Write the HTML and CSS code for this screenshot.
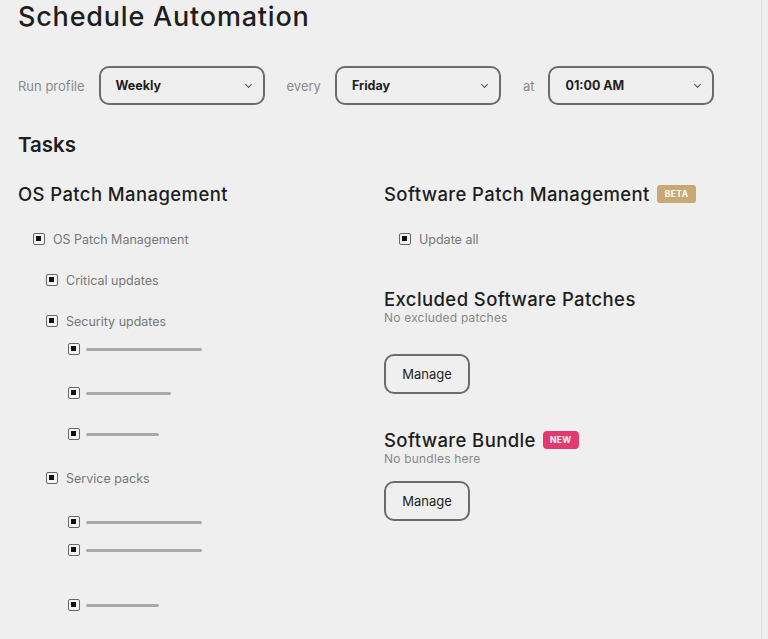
FILE: index.html
```html
<!DOCTYPE html>
<html lang="en">
<head>
    <meta charset="UTF-8">
    <meta name="viewport" content="width=device-width, initial-scale=1.0">
    <title>Schedule Automation</title>
    <link rel="stylesheet" href="styles.css">
</head>
<body>
    <div class="page">
        <h1 class="title">Schedule Automation</h1>

        <div class="schedule">
            <span class="field-label">Run profile</span>
            <div class="select"><span>Weekly</span><span class="chevron"></span></div>
            <span class="field-label">every</span>
            <div class="select"><span>Friday</span><span class="chevron"></span></div>
            <span class="field-label">at</span>
            <div class="select"><span>01:00 AM</span><span class="chevron"></span></div>
        </div>

        <h2 class="tasks-title">Tasks</h2>

        <div class="columns">
            <div class="column">
                <h3 class="section-title">OS Patch Management</h3>
                <ul class="tree">
                    <li class="item level-1"><span class="check"></span><span>OS Patch Management</span></li>
                    <li class="item level-2"><span class="check"></span><span>Critical updates</span></li>
                    <li class="item level-2"><span class="check"></span><span>Security updates</span></li>
                    <li class="item level-3 tight"><span class="check"></span><span class="bar bar-long"></span></li>
                    <li class="item level-3 wide"><span class="check"></span><span class="bar bar-mid"></span></li>
                    <li class="item level-3"><span class="check"></span><span class="bar bar-short"></span></li>
                    <li class="item level-2 wide"><span class="check"></span><span>Service packs</span></li>
                    <li class="item level-3 wide"><span class="check"></span><span class="bar bar-long"></span></li>
                    <li class="item level-3 tight"><span class="check"></span><span class="bar bar-long"></span></li>
                    <li class="item level-3 loose"><span class="check"></span><span class="bar bar-short"></span></li>
                </ul>
            </div>

            <div class="column">
                <h3 class="section-title">Software Patch Management <span class="badge badge-beta">BETA</span></h3>
                <ul class="tree">
                    <li class="item level-1"><span class="check"></span><span>Update all</span></li>
                </ul>

                <div class="block excluded">
                    <h3 class="section-title">Excluded Software Patches</h3>
                    <p class="note">No excluded patches</p>
                    <button class="button">Manage</button>
                </div>

                <div class="block bundle">
                    <h3 class="section-title">Software Bundle <span class="badge badge-new">NEW</span></h3>
                    <p class="note">No bundles here</p>
                    <button class="button">Manage</button>
                </div>
            </div>
        </div>
    </div>
</body>
</html>
```

FILE: styles.css
```css
body {
    margin: 0;
    background: #efefef;
    font-family: Inter, "Noto Sans", sans-serif;
    color: #1e1e1e;
}
.page {
    width: 743px;
    height: 639px;
    padding-left: 18px;
    border-right: 1px solid #e2e2e2;
    overflow: hidden;
}
.title {
    margin: 0;
    font-size: 27px;
    font-weight: 500;
    line-height: 33px;
    letter-spacing: 0.8px;
}
.schedule {
    display: flex;
    align-items: center;
    margin-top: 33px;
}
.field-label {
    font-size: 13px;
    color: #8a8a8a;
    margin-right: 14px;
}
.schedule .select + .field-label {
    margin-left: 22px;
}
.select {
    display: flex;
    align-items: center;
    justify-content: space-between;
    box-sizing: border-box;
    width: 166px;
    height: 39px;
    padding: 0 12px 0 15px;
    border: 2px solid #6b6b6b;
    border-radius: 10px;
    font-size: 12.5px;
    font-weight: 700;
    color: #1e1e1e;
}
.chevron {
    width: 4px;
    height: 4px;
    border-right: 1.5px solid #555;
    border-bottom: 1.5px solid #555;
    transform: rotate(45deg);
    margin-top: -3px;
}
.tasks-title {
    margin: 26px 0 0;
    font-size: 20.5px;
    font-weight: 600;
    line-height: 28px;
}
.columns {
    display: grid;
    grid-template-columns: 366px 1fr;
    margin-top: 22px;
}
.section-title {
    display: flex;
    align-items: center;
    margin: 0;
    font-size: 18.5px;
    font-weight: 500;
    line-height: 26px;
    letter-spacing: 0.4px;
}
.badge {
    margin-left: 7px;
    padding: 0 8px;
    height: 18px;
    line-height: 18px;
    border-radius: 3px;
    font-size: 8.5px;
    font-weight: 700;
    color: #fff;
    letter-spacing: 0.4px;
}
.badge-beta {
    background: #c8a874;
}
.badge-new {
    background: #e23a6e;
    border-radius: 4px;
    padding: 0 7px;
}
.tree {
    list-style: none;
    margin: 22px 0 0;
    padding: 0;
}
.item {
    display: flex;
    align-items: center;
    height: 20px;
    margin-top: 21px;
    font-size: 12.5px;
    color: #777;
}
.item:first-child {
    margin-top: 0;
}
.item.tight {
    margin-top: 8px;
}
.item.wide {
    margin-top: 24px;
}
.item.loose {
    margin-top: 35px;
}
.level-1 {
    padding-left: 15px;
}
.level-2 {
    padding-left: 28px;
}
.level-3 {
    padding-left: 50px;
}
.check {
    position: relative;
    box-sizing: border-box;
    width: 12px;
    height: 12px;
    margin-right: 8px;
    border: 1.5px solid #666;
    border-radius: 2px;
    background: #f4f4f4;
    flex-shrink: 0;
}
.check::after {
    content: "";
    position: absolute;
    left: 2px;
    top: 2px;
    width: 5px;
    height: 5px;
    background: #111;
}
.level-3 .check {
    margin-right: 6px;
}
.bar {
    height: 3px;
    border-radius: 2px;
    background: #a9a9a9;
}
.bar-long {
    width: 116px;
}
.bar-mid {
    width: 85px;
}
.bar-short {
    width: 73px;
}
.block.excluded {
    margin-top: 37px;
}
.block.bundle {
    margin-top: 33px;
}
.note {
    margin: -2px 0 0;
    font-size: 12px;
    color: #888;
    line-height: 15px;
    letter-spacing: 0.2px;
}
.button {
    display: block;
    box-sizing: border-box;
    width: 86px;
    height: 40px;
    margin-top: 29px;
    border: 2px solid #6b6b6b;
    border-radius: 10px;
    background: transparent;
    font-family: inherit;
    font-size: 13px;
    color: #1e1e1e;
    cursor: pointer;
}
.bundle .button {
    margin-top: 15px;
}
```
